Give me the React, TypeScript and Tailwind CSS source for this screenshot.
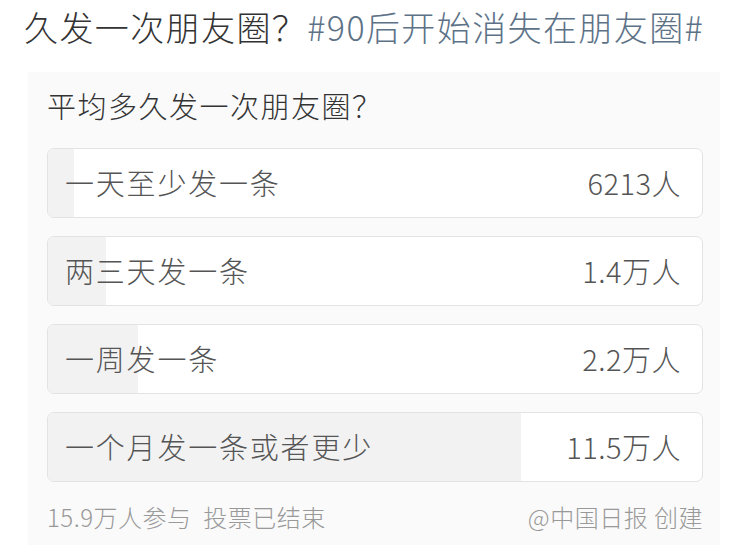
import React from "react";

type Option = { label: string; count: string; votes: number };

const TOTAL = 159000;

const options: Option[] = [
  { label: "一天至少发一条", count: "6213人", votes: 6213 },
  { label: "两三天发一条", count: "1.4万人", votes: 14000 },
  { label: "一周发一条", count: "2.2万人", votes: 22000 },
  { label: "一个月发一条或者更少", count: "11.5万人", votes: 115000 },
];

const font = {
  fontFamily: '"Noto Sans CJK SC", "Noto Sans", sans-serif',
};

function PollOption({ option }: { option: Option }) {
  const pct = (option.votes / TOTAL) * 100;
  return (
    <div className="relative h-[70px] overflow-hidden rounded-[7px] border border-[#e3e3e5] bg-white">
      <div
        className="absolute inset-y-0 left-0 bg-[#f2f2f3]"
        style={{ width: `${pct}%` }}
      />
      <div className="relative flex h-full items-center justify-between pl-[17px] pr-[21px] text-[29px] font-light text-[#555]">
        <span className="tracking-[1.8px]">{option.label}</span>
        <span className="tracking-[0.5px]">{option.count}</span>
      </div>
    </div>
  );
}

export default function App() {
  return (
    <div className="h-[545px] w-[750px] overflow-hidden bg-white" style={font}>
      <h1 className="pl-[24px] text-[34px] font-light leading-[54px] tracking-[1.4px] text-[#333] whitespace-nowrap">
        久发一次朋友圈？<span className="text-[#5d7287]">#90后开始消失在朋友圈#</span>
      </h1>
      <div className="ml-[28px] mt-[18px] w-[692px] bg-[#fafafa] pb-[20px] pl-[19px] pr-[17px] pt-[15px]">
        <div className="text-[29px] font-light leading-[36px] tracking-[1.5px] text-[#333]">平均多久发一次朋友圈？</div>
        <div className="mt-[25px] flex flex-col gap-[18px]">
          {options.map((o) => (
            <PollOption key={o.label} option={o} />
          ))}
        </div>
        <div className="mt-[20px] flex items-center justify-between text-[24px] font-light leading-[30px] tracking-[0.5px] text-[#999]">
          <span>15.9万人参与&nbsp;&nbsp;投票已结束</span>
          <span>@中国日报 创建</span>
        </div>
      </div>
    </div>
  );
}
